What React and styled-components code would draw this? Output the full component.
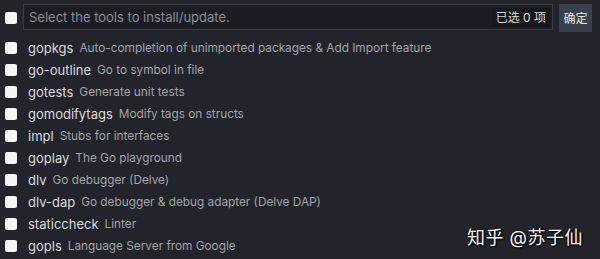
import React from 'react'
import styled, { createGlobalStyle } from 'styled-components'

const GlobalStyle = createGlobalStyle`
  html, body {
    margin: 0;
    padding: 0;
    background: #22232b;
  }
  body {
    font-family: Inter, "Noto Sans", "Noto Sans CJK SC", sans-serif;
    -webkit-font-smoothing: antialiased;
  }
`

const tools = [
  { name: 'gopkgs', desc: 'Auto-completion of unimported packages & Add Import feature' },
  { name: 'go-outline', desc: 'Go to symbol in file' },
  { name: 'gotests', desc: 'Generate unit tests' },
  { name: 'gomodifytags', desc: 'Modify tags on structs' },
  { name: 'impl', desc: 'Stubs for interfaces' },
  { name: 'goplay', desc: 'The Go playground' },
  { name: 'dlv', desc: 'Go debugger (Delve)' },
  { name: 'dlv-dap', desc: 'Go debugger & debug adapter (Delve DAP)' },
  { name: 'staticcheck', desc: 'Linter' },
  { name: 'gopls', desc: 'Language Server from Google' },
]

const App = () => {
  return (
    <>
      <GlobalStyle />
      <Picker>
        <Header>
          <Check />
          <InputBox>
            <Placeholder>Select the tools to install/update.</Placeholder>
            <Count>已选 0 项</Count>
          </InputBox>
          <OkButton>确定</OkButton>
        </Header>
        <List>
          {tools.map(t => (
            <Row key={t.name}>
              <Check />
              <Name>{t.name}</Name>
              <Desc>{t.desc}</Desc>
            </Row>
          ))}
        </List>
        <Watermark>知乎 @苏子仙</Watermark>
      </Picker>
    </>
  )
}

export default App

const Picker = styled.div`
  position: relative;
  width: 600px;
  height: 259px;
  background: #22232b;
  overflow: hidden;
`

const Header = styled.div`
  display: flex;
  align-items: center;
  height: 36px;
  padding: 0 7px 0 5px;
  box-sizing: border-box;
`

const Check = styled.span`
  display: block;
  flex: none;
  width: 12px;
  height: 12px;
  border-radius: 2px;
  background: #f4f4f4;
`

const InputBox = styled.div`
  display: flex;
  align-items: center;
  justify-content: space-between;
  margin-left: 6px;
  width: 530px;
  height: 26px;
  margin-top: -2px;
  box-sizing: border-box;
  border: 1px solid #3b3c44;
  background: #1c1d24;
  padding: 0 2px 0 5px;
`

const Placeholder = styled.span`
  font-size: 13px;
  color: #8b8c92;
`

const Count = styled.span`
  background: #17181e;
  color: #d8d8d8;
  font-size: 12px;
  padding: 2px 4px;
  line-height: 15px;
`

const OkButton = styled.div`
  margin-left: 6px;
  width: 33px;
  height: 28px;
  margin-top: -1px;
  display: flex;
  align-items: center;
  justify-content: center;
  background: #3b414c;
  color: #e4e4e4;
  font-size: 12px;
`

const List = styled.div`
  display: flex;
  flex-direction: column;
`

const Row = styled.div`
  display: flex;
  align-items: center;
  height: 22px;
  box-sizing: border-box;
  padding-left: 5px;
  padding-top: 1px;
`

const Name = styled.span`
  margin-left: 11px;
  font-size: 13px;
  color: #dcdcdc;
`

const Desc = styled.span`
  margin-left: 6px;
  font-size: 11.8px;
  color: #a2a3a8;
`

const Watermark = styled.div`
  position: absolute;
  right: 17px;
  bottom: 10px;
  font-size: 18px;
  color: #f5f5f5;
  text-shadow: 0 0 2px #000, 1px 1px 2px #000;
  letter-spacing: 0.5px;
`
